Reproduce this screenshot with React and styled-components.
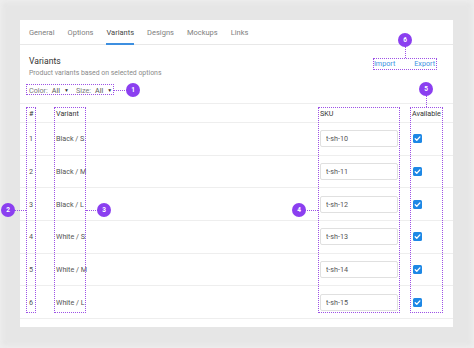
import React from 'react'
import styled, { createGlobalStyle } from 'styled-components'

const GlobalStyle = createGlobalStyle`
  html, body {
    margin: 0;
    background: #e6e6e6;
    font-family: Roboto, "Liberation Sans", sans-serif;
  }
  * { box-sizing: border-box; }
`

const tabs = ['General', 'Options', 'Variants', 'Designs', 'Mockups', 'Links']

const variants = [
  { id: 1, name: 'Black / S', sku: 't-sh-10' },
  { id: 2, name: 'Black / M', sku: 't-sh-11' },
  { id: 3, name: 'Black / L', sku: 't-sh-12' },
  { id: 4, name: 'White / S', sku: 't-sh-13' },
  { id: 5, name: 'White / M', sku: 't-sh-14' },
  { id: 6, name: 'White / L', sku: 't-sh-15' },
]

// annotation boxes and badges, in page coordinates
const boxes = [
  { x: 26, y: 84, w: 88, h: 11 },
  { x: 373, y: 58, w: 64, h: 12 },
  { x: 26, y: 107, w: 10, h: 206 },
  { x: 54, y: 107, w: 32, h: 206 },
  { x: 318, y: 107, w: 82, h: 206 },
  { x: 410, y: 107, w: 33, h: 206 },
]

const links = [
  { x: 114, y: 90, w: 13, dir: 'h' },
  { x: 14, y: 210, w: 12, dir: 'h' },
  { x: 86, y: 210, w: 12, dir: 'h' },
  { x: 305, y: 210, w: 13, dir: 'h' },
  { x: 426, y: 95, w: 12, dir: 'v' },
  { x: 405, y: 46, w: 12, dir: 'v' },
]

const badges = [
  { n: 1, x: 133, y: 90 },
  { n: 2, x: 8, y: 210 },
  { n: 3, x: 104, y: 210 },
  { n: 4, x: 299, y: 210 },
  { n: 5, x: 426, y: 89 },
  { n: 6, x: 405, y: 40 },
]

function Check() {
  return (
    <CheckBox>
      <svg width="9" height="9" viewBox="0 0 9 9">
        <rect x="0" y="0" width="9" height="9" rx="1.5" fill="#1e88e5" />
        <path d="M2.2 4.7 L3.8 6.2 L6.9 2.9" stroke="#fff" strokeWidth="1.3" fill="none" strokeLinecap="round" strokeLinejoin="round" />
      </svg>
    </CheckBox>
  )
}

export default function App() {
  return (
    <Page>
      <GlobalStyle />
      <Card>
        <TabBar>
          {tabs.map(t => (
            <Tab key={t} $active={t === 'Variants'}>{t}</Tab>
          ))}
        </TabBar>

        <Header>
          <div>
            <Title>Variants</Title>
            <Subtitle>Product variants based on selected options</Subtitle>
            <Filters>
              <Label>Color:</Label><Value>All</Value><Caret>▼</Caret>
              <Label $gap>Size:</Label><Value>All</Value><Caret>▼</Caret>
            </Filters>
          </div>
          <Actions>
            <LinkText>Import</LinkText>
            <LinkText>Export</LinkText>
          </Actions>
        </Header>

        <Table>
          <HeadRow>
            <NumCell>#</NumCell>
            <NameCell>Variant</NameCell>
            <SkuCell>SKU</SkuCell>
            <AvailCell>Available</AvailCell>
          </HeadRow>
          {variants.map(v => (
            <Row key={v.id}>
              <NumCell>{v.id}</NumCell>
              <NameCell>{v.name}</NameCell>
              <SkuCell><SkuInput readOnly value={v.sku} /></SkuCell>
              <AvailCell><Check /></AvailCell>
            </Row>
          ))}
        </Table>
      </Card>

      {boxes.map((b, i) => (
        <DashBox key={i} style={{ left: b.x, top: b.y, width: b.w, height: b.h }} />
      ))}
      {links.map((l, i) => (
        <Connector key={i} $dir={l.dir}
          style={l.dir === 'h'
            ? { left: l.x, top: l.y, width: l.w }
            : { left: l.x, top: l.y, height: l.w }} />
      ))}
      {badges.map(b => (
        <Badge key={b.n} style={{ left: b.x - 7, top: b.y - 7 }}>{b.n}</Badge>
      ))}
    </Page>
  )
}

const Page = styled.div`
  position: relative;
  width: 474px;
  height: 348px;
  padding: 20px 21px 21px 20px;
  background: #e6e6e6;
  box-shadow: inset 0 0 5px 2px #eeeeee;
`

const Card = styled.div`
  background: #fff;
  width: 433px;
  height: 307px;
  overflow: hidden;
`

const TabBar = styled.div`
  display: flex;
  gap: 13px;
  height: 25px;
  padding: 0 9px;
  border-bottom: 1px solid #e8e8e8;
`

const Tab = styled.div`
  display: flex;
  align-items: center;
  height: 25px;
  font-size: 7.5px;
  color: ${p => (p.$active ? '#444' : '#808080')};
  box-shadow: ${p => (p.$active ? 'inset 0 -2px 0 #3d8fe0' : 'none')};
  margin-bottom: -1px;
`

const Header = styled.div`
  display: flex;
  justify-content: space-between;
  padding: 10px 18px 0 9px;
`

const Title = styled.div`
  font-size: 8.6px;
  line-height: 12px;
  color: #333;
`

const Subtitle = styled.div`
  margin-top: 1px;
  font-size: 6.9px;
  line-height: 10px;
  color: #8a8a8a;
`

const Filters = styled.div`
  display: flex;
  align-items: center;
  margin-top: 7px;
  height: 10px;
  font-size: 7.2px;
`

const Label = styled.span`
  color: #7a7a7a;
  margin-left: ${p => (p.$gap ? '7px' : '0')};
`

const Value = styled.span`
  color: #555;
  margin-left: 4px;
`

const Caret = styled.span`
  color: #333;
  font-size: 5px;
  margin-left: 4px;
`

const Actions = styled.div`
  display: flex;
  gap: 19px;
  margin-top: 4px;
  height: 10px;
  line-height: 10px;
`

const LinkText = styled.span`
  font-size: 7.2px;
  color: #3d92e2;
`

const Table = styled.div`
  margin-top: 8px;
`

const rowGrid = `
  display: grid;
  grid-template-columns: 34px 264px 92px 1fr;
  align-items: center;
`

const HeadRow = styled.div`
  ${rowGrid}
  height: 20px;
  border-top: 1px solid #eeeeee;
  border-bottom: 1px solid #eeeeee;
  color: #333;
  font-size: 7.2px;
`

const Row = styled.div`
  ${rowGrid}
  height: 32.7px;
  border-bottom: 1px solid #eeeeee;
  color: #555;
  font-size: 7.2px;
`

const NumCell = styled.div`
  padding-left: 9px;
`

const NameCell = styled.div`
  padding-left: 2px;
  white-space: nowrap;
`

const SkuCell = styled.div`
  padding-left: 2px;
`

const AvailCell = styled.div`
  padding-left: 2px;
`

const SkuInput = styled.input`
  display: block;
  width: 78px;
  height: 17px;
  border: 1px solid #e0e0e0;
  border-radius: 2px;
  padding: 0 0 0 5px;
  font-family: inherit;
  font-size: 7.2px;
  color: #555;
  background: #fff;
  outline: none;
`

const CheckBox = styled.span`
  display: flex;
  margin-left: 1px;
`

const DashBox = styled.div`
  position: absolute;
  border: 1px dotted #9d52e6;
`

const Connector = styled.div`
  position: absolute;
  ${p => (p.$dir === 'h'
    ? 'border-top: 1px dotted #9d52e6;'
    : 'border-left: 1px dotted #9d52e6;')}
`

const Badge = styled.div`
  position: absolute;
  width: 14px;
  height: 14px;
  border-radius: 50%;
  background: #8b3ff0;
  color: #fff;
  font-size: 6.5px;
  font-weight: 700;
  display: flex;
  align-items: center;
  justify-content: center;
`
